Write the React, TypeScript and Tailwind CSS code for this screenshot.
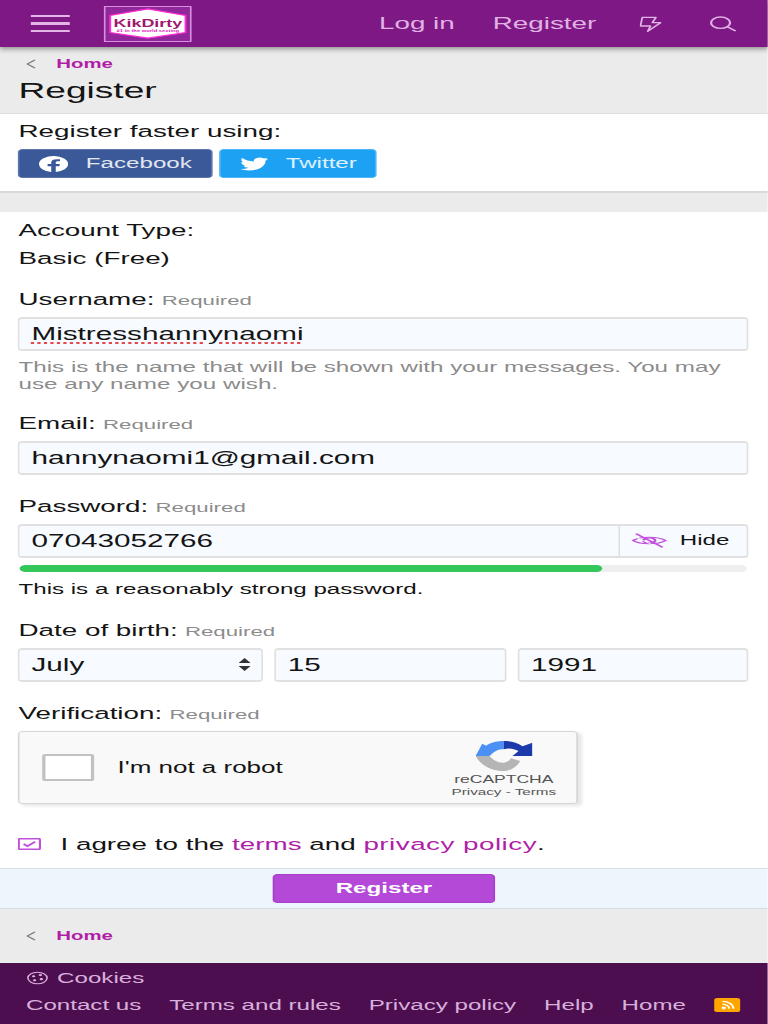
import React from 'react';

const font = { fontFamily: '"Liberation Sans", Arial, sans-serif' };

function Field({ label, className }: { label: string; className?: string }) {
    return (
        <div className={`h-[20px] text-[17.14px] leading-[20px] text-[#141414] ${className ?? ''}`}>
            {label}
            <span className="text-[13.7px] leading-none text-[#8c8c8c] ml-[4.5px]">Required</span>
        </div>
    );
}

function TextBox({ children, className }: { children?: React.ReactNode; className?: string }) {
    return (
        <div className={`h-[34px] bg-[#f7fbff] border-x border-y-2 border-[#e0e0e0] rounded-[3px] flex items-center px-[7px] text-[18.3px] text-[#141414] ${className ?? ''}`}>
            {children}
        </div>
    );
}

function Breadcrumb() {
    return (
        <div className="flex items-center text-[12.57px] leading-[16px] font-bold text-[#b01ea8]">
            <svg width="6" height="10" viewBox="0 0 6 10" preserveAspectRatio="none" className="ml-[4.3px] mr-[13px]" fill="none" stroke="#808080" strokeWidth="1">
                <path d="M5.5 1 L0.8 5 L5.5 9" />
            </svg>
            Home
        </div>
    );
}

export default function App() {
    return (
        <div style={font} className="w-[473.14px] h-[1024px] origin-top-left scale-x-[1.6232] bg-white overflow-hidden flex flex-col">
            {/* Header */}
            <div className="h-[47px] shrink-0 bg-[#7e1884] flex items-center text-[#e0b3e4] text-[17.14px] shadow-[0_2px_4px_rgba(0,0,0,0.4)] z-10">
                <div className="ml-[19px] w-[24px] flex flex-col gap-[5px]">
                    <div className="h-[2.4px] bg-[#e2b5e6]" />
                    <div className="h-[2.4px] bg-[#e2b5e6]" />
                    <div className="h-[2.4px] bg-[#e2b5e6]" />
                </div>
                <div className="ml-[20.5px] w-[54.2px] h-[36px] border border-[#d68fdc] bg-[#91279a]">
                    <svg viewBox="0 0 54 36" preserveAspectRatio="none" className="w-full h-full">
                        <polygon points="27,2 51,9 51,27 27,33 3,27 3,9" fill="#ffffff" stroke="#ff2bd6" strokeWidth="1.2" />
                        <text x="27" y="21.5" textAnchor="middle" fontSize="11.4" fontWeight="700" fill="#a0186e">KikDirty</text>
                        <text x="27" y="27" textAnchor="middle" fontSize="3.7" fontWeight="700" fill="#e020c0">#1 in the world sexting</text>
                    </svg>
                </div>
                <span className="ml-[115.8px]">Log in</span>
                <span className="ml-[23.4px]">Register</span>
                <svg viewBox="0 0 24 24" preserveAspectRatio="none" className="ml-[26.8px] w-[13.5px] h-[16px]" fill="none" stroke="currentColor" strokeWidth="2" strokeLinejoin="round">
                    <path d="M3 2 H18 L14 10 H23 L9 23 L12 15 H1 Z" />
                </svg>
                <svg viewBox="0 0 24 24" preserveAspectRatio="none" className="ml-[29.6px] w-[16.6px] h-[16px]" fill="none" stroke="currentColor" strokeWidth="2" strokeLinecap="round">
                    <circle cx="10" cy="10" r="8.5" />
                    <path d="M16 16 L23 22" />
                </svg>
            </div>

            {/* Page title */}
            <div className="h-[67px] shrink-0 bg-[#ebebeb] border-b border-[#dedede] pl-[11.4px] pr-[11.8px] pt-[9px]">
                <Breadcrumb />
                <h1 className="text-[22.86px] leading-[26px] mt-[5px] text-[#141414]">Register</h1>
            </div>

            {/* Social logins */}
            <div className="h-[79px] shrink-0 bg-white border-b-2 border-[#d8d8d8] pl-[11.4px] pr-[11.8px] pt-[7px]">
                <div className="text-[17.14px] leading-[20px] text-[#141414]">Register faster using:</div>
                <div className="flex gap-[3.7px] mt-[8px]">
                    <div className="w-[119.5px] h-[29px] rounded-[3px] bg-[#3b5998] border border-[#5d77ad] flex items-center text-white/85 text-[14.86px]">
                        <svg viewBox="0 0 24 24" preserveAspectRatio="none" className="ml-[12px] w-[18px] h-[16px]" fill="#ffffff">
                            <path d="M24 12a12 12 0 1 0-13.9 11.9v-8.4H7.1V12h3V9.4c0-3 1.8-4.7 4.5-4.7 1.3 0 2.7.2 2.7.2v3h-1.5c-1.5 0-2 .9-2 1.9V12h3.4l-.5 3.5h-2.9v8.4A12 12 0 0 0 24 12z" />
                        </svg>
                        <span className="ml-[10.5px]">Facebook</span>
                    </div>
                    <div className="w-[97.3px] h-[29px] rounded-[3px] bg-[#1da1f2] border border-[#4db5f5] flex items-center text-white/85 text-[14.86px]">
                        <svg viewBox="0 0 24 24" preserveAspectRatio="none" className="ml-[12.5px] w-[17.3px] h-[16px]" fill="#ffffff">
                            <path d="M23.95 4.57a10 10 0 0 1-2.82.77 4.96 4.96 0 0 0 2.16-2.72c-.95.55-2 .95-3.12 1.18a4.92 4.92 0 0 0-8.38 4.48C7.69 8.1 4.07 6.13 1.64 3.16a4.82 4.82 0 0 0-.67 2.48c0 1.71.87 3.21 2.19 4.1a4.9 4.9 0 0 1-2.23-.62v.06a4.92 4.92 0 0 0 3.95 4.83 5 5 0 0 1-2.21.08 4.94 4.94 0 0 0 4.6 3.42A9.87 9.87 0 0 1 0 19.54a13.94 13.94 0 0 0 7.55 2.21c9.05 0 14-7.5 14-13.98 0-.21 0-.42-.01-.63a9.94 9.94 0 0 0 2.41-2.57z" />
                        </svg>
                        <span className="ml-[10.7px]">Twitter</span>
                    </div>
                </div>
            </div>

            <div className="h-[19px] shrink-0 bg-[#ebebeb]" />

            {/* Form */}
            <div className="h-[656px] shrink-0 pl-[11.4px] pr-[11.8px] pt-[8px] text-[#141414]">
                <div className="text-[17.14px] leading-[20px]">Account Type:</div>
                <div className="text-[17.14px] leading-[20px] mt-[8px]">Basic (Free)</div>

                <Field label="Username:" className="mt-[21px]" />
                <TextBox className="mt-[7.5px]">
                    <span className="underline decoration-dotted decoration-[#e0393e] underline-offset-[3px]">Mistresshannynaomi</span>
                </TextBox>
                <div className="text-[14.92px] leading-[17px] text-[#8c8c8c] mt-[7.5px]">
                    This is the name that will be shown with your messages. You may use any name you wish.
                </div>

                <Field label="Email:" className="mt-[21px]" />
                <TextBox className="mt-[7.5px]">hannynaomi1@gmail.com</TextBox>

                <Field label="Password:" className="mt-[21.5px]" />
                <div className="mt-[7.5px] h-[34px] flex bg-[#f7fbff] border-x border-y-2 border-[#e0e0e0] rounded-[3px] text-[18.3px]">
                    <div className="flex-1 flex items-center px-[7px]">07043052766</div>
                    <div className="w-[79.5px] border-l border-[#e0e0e0] flex items-center text-[14.86px]">
                        <svg viewBox="0 0 24 24" preserveAspectRatio="none" className="ml-[7.5px] w-[22px] h-[15px]" fill="none" stroke="#c04fdc" strokeWidth="1.8">
                            <path d="M1 12 C6 5 18 5 23 12 C18 19 6 19 1 12 Z" />
                            <circle cx="12" cy="12" r="4" />
                            <path d="M3 1 L21 23" />
                            <path d="M0.5 4 L18 23" stroke="#f7fbff" strokeWidth="1" />
                        </svg>
                        <span className="ml-[7.5px]">Hide</span>
                    </div>
                </div>
                <div className="mt-[7.5px] h-[7px] mx-[1px] rounded-full bg-[#eeeeee] overflow-hidden">
                    <div className="h-full w-[80%] rounded-full bg-[#33c75c]" />
                </div>
                <div className="text-[14.86px] leading-[17px] mt-[9px]">This is a reasonably strong password.</div>

                <Field label="Date of birth:" className="mt-[22px]" />
                <div className="mt-[7.5px] flex gap-[7.6px]">
                    <TextBox className="w-[150.3px] shrink-0 justify-between pr-[6px]">
                        July
                        <svg width="7.4" height="13" viewBox="0 0 9 13" preserveAspectRatio="none" fill="#333333">
                            <path d="M4.5 0 L9 5 H0 Z M4.5 13 L0 8 H9 Z" />
                        </svg>
                    </TextBox>
                    <TextBox className="flex-1">15</TextBox>
                    <TextBox className="flex-1">1991</TextBox>
                </div>

                <Field label="Verification:" className="mt-[21.5px]" />
                <div className="mt-[8px] w-[344.4px] h-[73px] bg-[#f9f9f9] border border-[#d6d6d6] rounded-[3px] shadow-[2px_2px_3px_rgba(0,0,0,0.1)] flex items-center">
                    <div className="ml-[14px] w-[32px] h-[27px] bg-white border-2 border-[#c1c1c1] rounded-[2px]" />
                    <span className="ml-[14px] text-[16px]">I'm not a robot</span>
                    <div className="ml-auto mr-[12.2px] flex flex-col items-center pt-[2px]">
                        <svg viewBox="0 0 172 90" preserveAspectRatio="none" className="w-[35px] h-[30px] mb-[2px]">
                            <path d="M0 45 L20 8 L32 14 C50 2 70 0 85 0 L85 25 C70 22 55 32 42 45 Z" fill="#4a90f5" />
                            <path d="M85 0 C105 0 125 4 142 16 L172 5 L172 45 L112 45 L130 30 C115 22 100 20 85 25 Z" fill="#1c3aa9" />
                            <path d="M0 45 L42 45 C55 60 70 66 85 65 C95 64 102 60 107 52 L135 60 C125 78 105 90 85 90 C55 90 20 80 0 45 Z" fill="#b5b5b5" />
                        </svg>
                        <span className="text-[10.8px] leading-[13px] text-[#555555]">reCAPTCHA</span>
                        <span className="text-[9.4px] leading-[11px] text-[#555555]">Privacy - Terms</span>
                    </div>
                </div>

                <div className="mt-[30px] flex items-center text-[17.14px] leading-[20px]">
                    <svg viewBox="0 0 24 16" preserveAspectRatio="none" className="w-[14.2px] h-[12px] mr-[11.7px]" fill="none" stroke="#c04fdc" strokeWidth="2.2">
                        <rect x="1" y="1" width="22" height="14" rx="1" />
                        <path d="M6 8 L10 11 L18 5" />
                    </svg>
                    <span>
                        I agree to the <span className="text-[#b01ea8]">terms</span> and{' '}
                        <span className="text-[#b01ea8] tracking-[0.3px]">privacy policy</span>.
                    </span>
                </div>
            </div>

            {/* Submit row */}
            <div className="h-[41px] shrink-0 bg-[#edf5fd] border-y border-[#d8dde2] flex items-center justify-center">
                <div className="w-[136.8px] h-[29px] rounded-[3px] bg-[#b349d6] border border-[#a73fca] text-white text-[14.86px] font-bold flex items-center justify-center">
                    Register
                </div>
            </div>

            {/* Bottom breadcrumb */}
            <div className="h-[54px] shrink-0 bg-[#ebebeb] pl-[11.4px] flex items-center">
                <Breadcrumb />
            </div>

            {/* Footer */}
            <div className="flex-1 bg-[#4d0e50] text-[#d8b0dc] text-[14.86px] px-[16px]">
                <div className="flex items-center mt-[6px] h-[18px]">
                    <svg viewBox="0 0 24 24" preserveAspectRatio="none" className="w-[14.2px] h-[14px] mr-[5px]" fill="none" stroke="currentColor" strokeWidth="1.6">
                        <circle cx="12" cy="12" r="10" />
                        <circle cx="8" cy="9" r="1" fill="currentColor" />
                        <circle cx="15" cy="7" r="1" fill="currentColor" />
                        <circle cx="16" cy="14" r="1" fill="currentColor" />
                        <circle cx="9" cy="16" r="1" fill="currentColor" />
                    </svg>
                    Cookies
                </div>
                <div className="flex items-center gap-[17.2px] mt-[9px] h-[18px]">
                    <span>Contact us</span>
                    <span>Terms and rules</span>
                    <span>Privacy policy</span>
                    <span>Help</span>
                    <span>Home</span>
                    <div className="w-[16.6px] h-[14px] rounded-[2px] bg-[#ffa500] flex items-center justify-center">
                        <svg viewBox="0 0 24 24" preserveAspectRatio="none" className="w-[9px] h-[10px]" fill="none" stroke="#ffffff" strokeWidth="3">
                            <circle cx="5" cy="19" r="2" />
                            <path d="M3 10 A11 11 0 0 1 14 21" />
                            <path d="M3 3 A18 18 0 0 1 21 21" />
                        </svg>
                    </div>
                </div>
            </div>
        </div>
    );
}
